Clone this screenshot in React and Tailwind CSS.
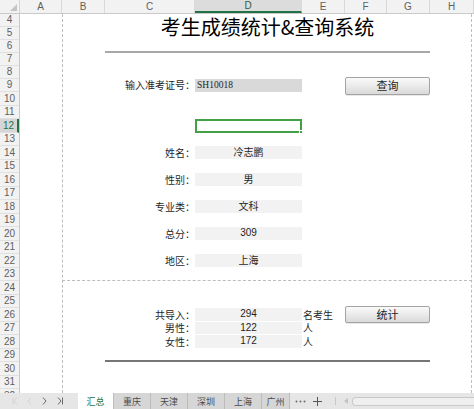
import React from "react";

const COLS = [
  { l: "A", w: "w-[42px]" },
  { l: "B", w: "w-[43px]" },
  { l: "C", w: "w-[90px]" },
  { l: "D", w: "w-[107px]" },
  { l: "E", w: "w-[43px]" },
  { l: "F", w: "w-[42px]" },
  { l: "G", w: "w-[43px]" },
  { l: "H", w: "w-[44px]" },
];

const ROWS = Array.from({ length: 29 }, (_, i) => i + 4);

function Label({ pos, children }) {
  return (
    <div className={`col-start-3 ${pos} flex items-center justify-end text-[10px] leading-none text-[#1f1f1f]`}>
      {children}
    </div>
  );
}

function Value({ pos, children }) {
  return (
    <div className={`col-start-4 ${pos} flex items-center justify-center bg-[#f2f2f2] border-b border-white text-[10px] leading-none text-[#1f1f1f]`}>
      {children}
    </div>
  );
}

function XlButton({ pos, h, children }) {
  return (
    <div
      className={`col-start-6 col-span-2 ${pos} self-center ${h} flex items-center justify-center rounded-[2px] border border-[#a3a3a3] bg-linear-to-b from-[#fafafa] to-[#dadada] text-[11px] leading-none text-[#1f1f1f] shadow-[0_1px_0_#e8e8e8]`}
    >
      {children}
    </div>
  );
}

function Tab({ w, active, children }) {
  return (
    <div
      className={`${w} h-full flex items-center justify-center border-r border-[#bcbcbc] ${
        active ? "bg-white text-[#217346]" : "bg-[#d6d6d6] text-[#4a4a4a]"
      }`}
    >
      {children}
    </div>
  );
}

export default function App() {
  return (
    <div className="w-[474px] h-[409px] overflow-hidden flex flex-col bg-white font-['Noto_Sans_CJK_SC',sans-serif]">
      {/* column header */}
      <div className="h-[13.5px] shrink-0 flex bg-[#f2f2f2] border-b border-[#c9c9c9] font-['Liberation_Sans',sans-serif] text-[10px] text-[#5f5f5f]">
        <div className="w-[20px] h-full relative border-r border-[#d4d4d4]">
          <svg className="absolute right-[2px] bottom-[2px]" width="7" height="7" viewBox="0 0 7 7">
            <path d="M7 0 L7 7 L0 7 Z" fill="#c4c4c4" />
          </svg>
        </div>
        {COLS.map((c) => (
          <div
            key={c.l}
            className={`${c.w} h-full flex items-center justify-center border-r border-[#d9d9d9] ${
              c.l === "D" ? "bg-[#dcdcdc] text-[#2e5d3b] border-b-2 border-b-[#217346]" : ""
            }`}
          >
            {c.l}
          </div>
        ))}
      </div>

      {/* body */}
      <div className="flex-1 min-h-0 overflow-hidden flex">
        {/* row headers */}
        <div className="w-[20px] shrink-0 flex flex-col bg-[#f2f2f2] border-r border-[#c9c9c9] font-['Liberation_Sans',sans-serif] text-[10px] text-[#5f5f5f]">
          {ROWS.map((r) => (
            <div
              key={r}
              className={`${r <= 8 ? "h-[13px]" : "h-[13.5px]"} shrink-0 flex items-center justify-center border-b border-[#e0e0e0] ${
                r === 12 ? "bg-[#d6d6d6] text-[#217346] border-r-2 border-r-[#217346]" : ""
              }`}
            >
              {r}
            </div>
          ))}
        </div>

        {/* cells */}
        <div className="grid grid-cols-[42px_43px_90px_107px_43px_42px_43px_44px] grid-rows-[repeat(5,13px)_repeat(24,13.5px)] shrink-0">
          {/* page break dashed lines */}
          <div className="col-start-2 col-span-7 row-span-full mr-[2px] border-l border-r border-dashed border-[#bdbdbd]" />
          <div className="col-start-2 col-span-7 row-start-1 row-span-20 mr-[2px] border-b border-dashed border-[#bdbdbd]" />

          {/* title */}
          <div className="col-start-3 col-span-5 row-start-1 row-span-3 pb-[13px] flex items-center justify-center text-[20px] leading-[26px] text-black">
            考生成绩统计&amp;查询系统
          </div>
          <div className="col-start-3 col-span-5 row-start-3 self-end h-[2px] bg-[#a8a8a8]" />

          {/* query row */}
          <Label pos="row-start-6">输入准考证号：</Label>
          <div className="col-start-4 row-start-6 flex items-center bg-[#d9d9d9] pl-[2px] font-['Liberation_Serif',serif] text-[9.5px] leading-none text-[#1f1f1f]">
            SH10018
          </div>
          <XlButton pos="row-start-5 row-span-3" h="h-[18px]">
            查询
          </XlButton>

          {/* selected cell D12 */}
          <div className="col-start-4 row-start-9 relative border-2 border-[#43a047]">
            <span className="absolute -right-[3px] -bottom-[3px] w-[4px] h-[4px] bg-[#43a047] border border-white" />
          </div>

          {/* details */}
          <Label pos="row-start-11">姓名：</Label>
          <Value pos="row-start-11">冷志鹏</Value>
          <Label pos="row-start-13">性别：</Label>
          <Value pos="row-start-13">男</Value>
          <Label pos="row-start-15">专业类：</Label>
          <Value pos="row-start-15">文科</Value>
          <Label pos="row-start-17">总分：</Label>
          <Value pos="row-start-17">
            <span className="font-['Liberation_Sans',sans-serif]">309</span>
          </Value>
          <Label pos="row-start-19">地区：</Label>
          <Value pos="row-start-19">上海</Value>

          {/* statistics */}
          <Label pos="row-start-23">共导入：</Label>
          <Value pos="row-start-23">
            <span className="font-['Liberation_Sans',sans-serif]">294</span>
          </Value>
          <div className="col-start-5 col-span-2 row-start-23 flex items-center pl-[1px] text-[10px] leading-none text-[#1f1f1f]">
            名考生
          </div>
          <Label pos="row-start-24">男性：</Label>
          <Value pos="row-start-24">
            <span className="font-['Liberation_Sans',sans-serif]">122</span>
          </Value>
          <div className="col-start-5 row-start-24 flex items-center pl-[1px] text-[10px] leading-none text-[#1f1f1f]">人</div>
          <Label pos="row-start-25">女性：</Label>
          <Value pos="row-start-25">
            <span className="font-['Liberation_Sans',sans-serif]">172</span>
          </Value>
          <div className="col-start-5 row-start-25 flex items-center pl-[1px] text-[10px] leading-none text-[#1f1f1f]">人</div>
          <XlButton pos="row-start-23" h="h-[17px]">
            统计
          </XlButton>

          <div className="col-start-3 col-span-5 row-start-26 self-end h-[2px] bg-[#767676]" />
        </div>
      </div>

      {/* sheet tabs */}
      <div className="h-[16px] shrink-0 flex items-stretch bg-[#e6e6e6] text-[9px] leading-none">
        <div className="w-[78px] h-full flex items-center">
          <svg className="ml-[12px]" width="6" height="8" viewBox="0 0 6 8">
            <path d="M1 0.5 V7.5 M5 0.5 L2 4 L5 7.5" stroke="#d2d2d2" strokeWidth="1" fill="none" />
          </svg>
          <svg className="ml-[9px]" width="5" height="8" viewBox="0 0 5 8">
            <path d="M4 0.5 L1 4 L4 7.5" stroke="#d2d2d2" strokeWidth="1" fill="none" />
          </svg>
          <svg className="ml-[10px]" width="5" height="8" viewBox="0 0 5 8">
            <path d="M1 0.5 L4 4 L1 7.5" stroke="#6b6b6b" strokeWidth="1" fill="none" />
          </svg>
          <svg className="ml-[10px]" width="6" height="8" viewBox="0 0 6 8">
            <path d="M1 0.5 L4 4 L1 7.5 M5.5 0.5 V7.5" stroke="#6b6b6b" strokeWidth="1" fill="none" />
          </svg>
        </div>
        <Tab w="w-[36px]" active>
          汇总
        </Tab>
        <Tab w="w-[37px]">重庆</Tab>
        <Tab w="w-[37px]">天津</Tab>
        <Tab w="w-[37px]">深圳</Tab>
        <Tab w="w-[37px]">上海</Tab>
        <Tab w="w-[28px]">广州</Tab>
        <div className="w-[20px] h-full flex items-center justify-center">
          <svg width="11" height="3" viewBox="0 0 11 3">
            <circle cx="1.5" cy="1.5" r="1" fill="#6b6b6b" />
            <circle cx="5.5" cy="1.5" r="1" fill="#6b6b6b" />
            <circle cx="9.5" cy="1.5" r="1" fill="#6b6b6b" />
          </svg>
        </div>
        <div className="w-[14px] h-full flex items-center justify-center">
          <svg width="9" height="9" viewBox="0 0 9 9">
            <path d="M4.5 0 V9 M0 4.5 H9" stroke="#555" strokeWidth="1" />
          </svg>
        </div>
        <div className="w-[28px] h-full flex items-center justify-end gap-[8px] pr-[4px]">
          <span className="w-px h-[8px] bg-[#c8c8c8]" />
          <svg width="4" height="6" viewBox="0 0 4 6">
            <path d="M4 0 L0 3 L4 6 Z" fill="#c4c4c4" />
          </svg>
        </div>
        <div className="flex-1 h-full flex items-center">
          <div className="w-full h-[9px] rounded-l-[4px] border border-r-0 border-[#c9c9c9] bg-[#efefef]" />
        </div>
      </div>
    </div>
  );
}
